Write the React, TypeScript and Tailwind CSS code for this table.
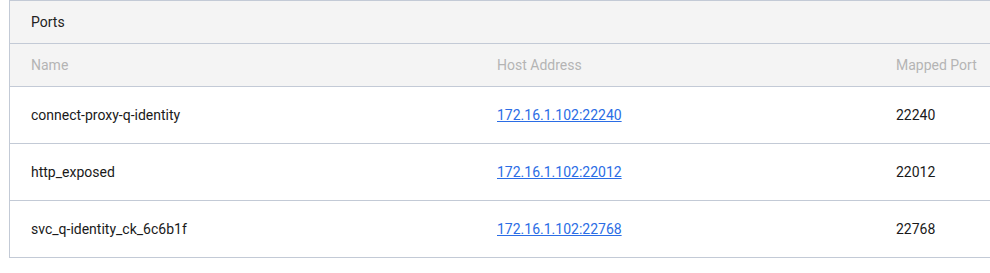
const rows = [
  { name: "connect-proxy-q-identity", host: "172.16.1.102:22240", port: "22240" },
  { name: "http_exposed", host: "172.16.1.102:22012", port: "22012" },
  { name: "svc_q-identity_ck_6c6b1f", host: "172.16.1.102:22768", port: "22768" },
];

export default function App() {
  return (
    <div className="w-[990px] h-[273px] overflow-hidden bg-white" style={{ fontFamily: "Roboto, sans-serif" }}>
      <div className="ml-[9px] w-[1000px] border-l border-t border-[#c3cad6] text-[14px]">
        {/* Section title */}
        <div className="h-[43px] bg-[#f4f4f4] border-b border-[#c3cad6] flex items-center pl-[21px] text-[#222]">
          Ports
        </div>

        {/* Column headers */}
        <div className="h-[43px] bg-[#f4f4f4] border-b border-[#c3cad6] grid grid-cols-[466px_399px_1fr] items-center pl-[21px] text-[#b4b4b4]">
          <span>Name</span>
          <span>Host Address</span>
          <span>Mapped Port</span>
        </div>

        {rows.map((r) => (
          <div
            key={r.name}
            className="h-[57px] border-b border-[#c3cad6] grid grid-cols-[466px_399px_1fr] items-center pl-[21px] text-[#1a1a1a]"
          >
            <span>{r.name}</span>
            <a href="#" className="text-[#2b6de5] underline w-fit">{r.host}</a>
            <span>{r.port}</span>
          </div>
        ))}
      </div>
    </div>
  );
}
